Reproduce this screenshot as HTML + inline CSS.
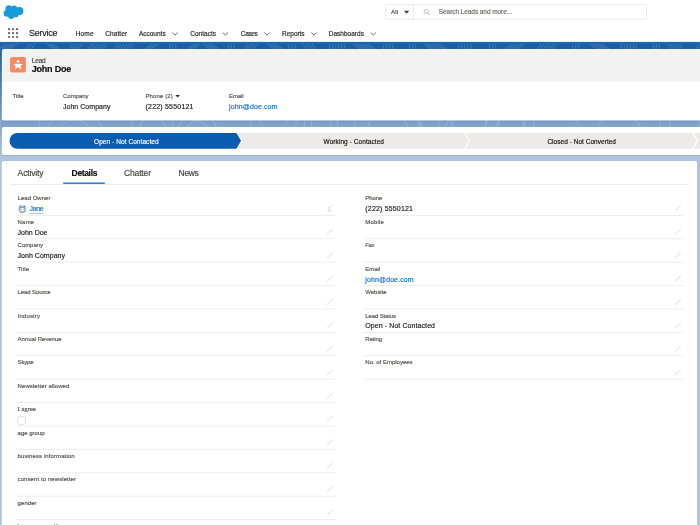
<!DOCTYPE html>
<html><head><meta charset="utf-8"><title>John Doe | Salesforce</title>
<style>
html,body{margin:0;padding:0}
body{width:700px;height:525px;overflow:hidden;position:relative;background:#b0c4df;font-family:"Liberation Sans",sans-serif}
.abs{position:absolute}
.t{position:absolute;white-space:pre;-webkit-text-stroke:0.15px currentColor}
#hdr{left:0;top:0;width:700px;height:42px;background:#fff}
#brandline{left:0;top:42px;width:700px;height:2px;background:#1468c4}
#band{left:0;top:44px;width:700px;height:118px;background:linear-gradient(#1b5e9e 0,#1d609f 5px,#7fa2cc 80px,#afc3e1 113px,#b0c4df 118px)}
.card{position:absolute;background:#fff;border-radius:2px}
.sh{position:absolute;height:1.6px;background:linear-gradient(rgba(30,60,110,.26),rgba(30,60,110,0))}
#c1{left:2px;top:49.2px;width:700px;height:71.3px}
#c1h{left:2px;top:49.2px;width:700px;height:32.4px;background:#f3f2f2;border-radius:2px 0 0 0}
#c2{left:2px;top:127px;width:700px;height:28px}
#c3{left:2px;top:160.9px;width:695px;height:380px}
svg{position:absolute;left:0;top:0}
#txt{position:absolute;left:0;top:0;width:700px;height:525px;will-change:transform}
</style></head><body>
<div class="abs" id="hdr"></div>
<div class="abs" id="brandline"></div>
<div class="abs" id="band"></div>
<div class="sh" style="left:3px;top:120.3px;width:697px"></div><div class="sh" style="left:3px;top:154.8px;width:697px"></div>
<svg width="700" height="525" viewBox="0 0 700 525">
<path d="M-2.9 49.9 L6.9 43.1 M0.1 49.9 L9.9 43.1 M3.1 49.9 L12.9 43.1 M6.1 49.9 L15.9 43.1 M9.1 49.9 L18.9 43.1 M23.5 51.4 L30.4 41.6 M26.5 51.4 L33.4 41.6 M29.5 51.4 L36.4 41.6 M45.2 43.1 L55.1 49.9 M48.2 43.1 L58.1 49.9 M51.2 43.1 L61.1 49.9 M67.5 51.4 L74.4 41.6 M70.5 51.4 L77.4 41.6 M73.5 51.4 L80.4 41.6 M76.5 51.4 L83.4 41.6 M86.4 51.4 L93.3 41.6 M89.4 51.4 L96.3 41.6 M92.4 51.4 L99.3 41.6 M95.4 51.4 L102.3 41.6 M98.4 51.4 L105.3 41.6 M101.4 51.4 L108.3 41.6 M112.8 51.4 L119.7 41.6 M115.8 51.4 L122.7 41.6 M118.8 51.4 L125.7 41.6 M121.8 51.4 L128.7 41.6 M124.8 51.4 L131.7 41.6 M127.8 51.4 L134.7 41.6 M143.6 49.9 L153.4 43.1 M146.6 49.9 L156.4 43.1 M149.6 49.9 L159.4 43.1 M168.8 40.6 L170.9 52.4 M171.8 40.6 L173.9 52.4 M174.8 40.6 L176.9 52.4 M185.8 49.9 L195.6 43.1 M188.8 49.9 L198.6 43.1 M191.8 49.9 L201.6 43.1 M201.2 43.1 L211.1 49.9 M204.2 43.1 L214.1 49.9 M207.2 43.1 L217.1 49.9 M210.2 43.1 L220.1 49.9 M227.3 40.6 L229.4 52.4 M230.3 40.6 L232.4 52.4 M233.3 40.6 L235.4 52.4 M243.0 51.4 L249.9 41.6 M246.0 51.4 L252.9 41.6 M249.0 51.4 L255.9 41.6 M252.0 51.4 L258.9 41.6 M265.3 43.1 L275.2 49.9 M268.3 43.1 L278.2 49.9 M271.3 43.1 L281.2 49.9 M274.3 43.1 L284.2 49.9 M288.2 40.6 L290.3 52.4 M291.2 40.6 L293.3 52.4 M294.2 40.6 L296.3 52.4 M301.4 41.6 L308.3 51.4 M304.4 41.6 L311.3 51.4 M307.4 41.6 L314.3 51.4 M310.4 41.6 L317.3 51.4 M328.6 52.4 L330.7 40.6 M331.6 52.4 L333.7 40.6 M334.6 52.4 L336.7 40.6 M337.6 52.4 L339.7 40.6 M340.6 52.4 L342.7 40.6 M343.6 52.4 L345.7 40.6 M351.8 43.1 L361.7 49.9 M354.8 43.1 L364.7 49.9 M357.8 43.1 L367.7 49.9 M360.8 43.1 L370.7 49.9 M363.8 43.1 L373.7 49.9 M366.8 43.1 L376.7 49.9 M384.8 40.6 L382.7 52.4 M387.8 40.6 L385.7 52.4 M390.8 40.6 L388.7 52.4 M393.8 40.6 L391.7 52.4 M408.5 40.6 L410.6 52.4 M411.5 40.6 L413.6 52.4 M414.5 40.6 L416.6 52.4 M422.6 43.1 L432.5 49.9 M425.6 43.1 L435.5 49.9 M428.6 43.1 L438.5 49.9 M431.6 43.1 L441.5 49.9 M434.6 43.1 L444.5 49.9 M437.6 43.1 L447.5 49.9 M457.8 40.6 L459.9 52.4 M460.8 40.6 L462.9 52.4 M463.8 40.6 L465.9 52.4 M466.8 40.6 L468.9 52.4 M469.8 40.6 L471.9 52.4 M488.6 40.6 L490.7 52.4 M491.6 40.6 L493.7 52.4 M494.6 40.6 L496.7 52.4 M503.9 49.9 L513.7 43.1 M506.9 49.9 L516.7 43.1 M509.9 49.9 L519.7 43.1 M512.9 49.9 L522.7 43.1 M515.9 49.9 L525.7 43.1 M535.7 51.4 L542.6 41.6 M538.7 51.4 L545.6 41.6 M541.7 51.4 L548.6 41.6 M544.7 51.4 L551.6 41.6 M547.7 51.4 L554.6 41.6 M550.7 51.4 L557.6 41.6 M571.7 52.4 L573.8 40.6 M574.7 52.4 L576.8 40.6 M577.7 52.4 L579.8 40.6 M588.5 43.1 L598.3 49.9 M591.5 43.1 L601.3 49.9 M594.5 43.1 L604.3 49.9 M597.5 43.1 L607.3 49.9 M600.5 43.1 L610.3 49.9 M620.3 40.6 L622.4 52.4 M623.3 40.6 L625.4 52.4 M626.3 40.6 L628.4 52.4 M629.3 40.6 L631.4 52.4 M632.3 40.6 L634.4 52.4 M635.3 40.6 L637.4 52.4 M652.2 52.4 L654.3 40.6 M655.2 52.4 L657.3 40.6 M658.2 52.4 L660.3 40.6 M665.8 41.6 L672.7 51.4 M668.8 41.6 L675.7 51.4 M671.8 41.6 L678.7 51.4 M674.8 41.6 L681.7 51.4 M677.8 41.6 L684.7 51.4 M693.8 51.4 L700.6 41.6 M696.8 51.4 L703.6 41.6 M699.8 51.4 L706.6 41.6" fill="none" stroke="#fff" stroke-opacity="0.2" stroke-width="0.9"/>
<rect x="0" y="41.9" width="700" height="2.1" fill="#1468c4"/>
<clipPath id="cb"><rect x="0" y="100" width="700" height="30"/></clipPath><g clip-path="url(#cb)" fill="none" stroke="#fff" stroke-opacity="0.22" stroke-width="0.8"><circle cx="20.0" cy="128.2" r="20.2"/><circle cx="75.1" cy="136.8" r="28.3"/><circle cx="75.1" cy="136.8" r="17.0"/><circle cx="152.4" cy="129.1" r="21.1"/><circle cx="152.4" cy="129.1" r="12.7"/><circle cx="197.2" cy="132.7" r="19.7"/><circle cx="197.2" cy="132.7" r="11.8"/><circle cx="273.5" cy="116.7" r="23.9"/><circle cx="273.5" cy="116.7" r="14.4"/><circle cx="321.0" cy="124.1" r="16.7"/><circle cx="321.0" cy="124.1" r="10.0"/><circle cx="387.7" cy="131.1" r="33.7"/><circle cx="387.7" cy="131.1" r="20.2"/><circle cx="433.1" cy="116.2" r="15.7"/><circle cx="468.7" cy="117.1" r="30.6"/><circle cx="468.7" cy="117.1" r="18.4"/><circle cx="510.2" cy="129.1" r="24.7"/><circle cx="510.2" cy="129.1" r="14.8"/><circle cx="550.9" cy="138.6" r="31.2"/><circle cx="619.2" cy="136.4" r="23.1"/><circle cx="684.8" cy="123.1" r="25.2"/><circle cx="684.8" cy="123.1" r="15.1"/></g>
<path d="M1.85 51.2 a2 2 0 0 1 2 -2.1 H700 V83 H1.85 Z" fill="#f3f2f2"/>
<path d="M1.85 81.5 H700 V120.4 H3.85 a2 2 0 0 1 -2 -2 Z" fill="#fff"/>
<path d="M1.85 128.9 a2 2 0 0 1 2 -2 H700 V154.9 H3.85 a2 2 0 0 1 -2 -2 Z" fill="#fff"/>
<path d="M1.8 162.9 a2 2 0 0 1 2 -2 H695 a2 2 0 0 1 2 2 V530 H1.8 Z" fill="#fff"/>
<g fill="#1a9ad9"><circle cx="8.9" cy="8.7" r="3.5"/><circle cx="14.2" cy="8.6" r="3"/><circle cx="19.3" cy="11.1" r="4.1"/><circle cx="7" cy="13.4" r="3.3"/><circle cx="11.1" cy="15.9" r="3"/><circle cx="15.6" cy="14.2" r="3.1"/><rect x="7" y="8" width="11" height="7"/></g>
<rect x="8.00" y="28.10" width="2.2" height="2.2" rx="0.8" fill="#6d6b69"/>
<rect x="11.95" y="28.10" width="2.2" height="2.2" rx="0.8" fill="#6d6b69"/>
<rect x="15.90" y="28.10" width="2.2" height="2.2" rx="0.8" fill="#6d6b69"/>
<rect x="8.00" y="32.00" width="2.2" height="2.2" rx="0.8" fill="#6d6b69"/>
<rect x="11.95" y="32.00" width="2.2" height="2.2" rx="0.8" fill="#6d6b69"/>
<rect x="15.90" y="32.00" width="2.2" height="2.2" rx="0.8" fill="#6d6b69"/>
<rect x="8.00" y="35.90" width="2.2" height="2.2" rx="0.8" fill="#6d6b69"/>
<rect x="11.95" y="35.90" width="2.2" height="2.2" rx="0.8" fill="#6d6b69"/>
<rect x="15.90" y="35.90" width="2.2" height="2.2" rx="0.8" fill="#6d6b69"/>
<path d="M172.5 32.6 L175.1 35.1 L177.7 32.6" fill="none" stroke="#605e5c" stroke-width="0.95"/>
<path d="M222.8 32.6 L225.4 35.1 L228.0 32.6" fill="none" stroke="#605e5c" stroke-width="0.95"/>
<path d="M264.3 32.6 L266.9 35.1 L269.5 32.6" fill="none" stroke="#605e5c" stroke-width="0.95"/>
<path d="M311.4 32.6 L314.0 35.1 L316.6 32.6" fill="none" stroke="#605e5c" stroke-width="0.95"/>
<path d="M370.7 32.6 L373.3 35.1 L375.9 32.6" fill="none" stroke="#605e5c" stroke-width="0.95"/>
<rect x="385.5" y="4.6" width="261" height="14.6" rx="2" fill="#fff" stroke="#dddbda" stroke-width="0.6"/>
<line x1="413.4" y1="4.6" x2="413.4" y2="19.2" stroke="#dddbda" stroke-width="0.6"/>
<path d="M404 10.8 h5.2 l-2.6 3 z" fill="#3e3e3c"/>
<circle cx="426.2" cy="11.6" r="2.1" fill="none" stroke="#a5a3a1" stroke-width="0.7"/><line x1="427.8" y1="13.2" x2="429.6" y2="15" stroke="#a5a3a1" stroke-width="0.7"/>
<rect x="10.1" y="56.9" width="15.8" height="15.7" rx="1.8" fill="#f88962"/>
<circle cx="18" cy="61.3" r="1.4" fill="#fff"/>
<path d="M13.3 64.3 L16.2 63.8 L18 63.65 L19.8 63.8 L22.8 64.3 L20.4 66.3 L21.5 69.7 L18 67.3 L14.6 69.7 L15.7 66.3 Z" fill="#fff"/>
<path d="M175.3 94.9 h4.6 l-2.3 2.7 z" fill="#2b2826"/>
<path d="M17.4 133 H236.4 L241.1 140.8 L236.4 148.7 H17.4 A7.85 7.85 0 0 1 17.4 133 Z" fill="#0a5cb0"/>
<path d="M237.7 133 H700 V148.7 H237.7 L242.4 140.8 Z" fill="#ecebea"/>
<path d="M464.6 132.6 L469.5 140.8 L464.6 149.1" fill="none" stroke="#fff" stroke-width="1.1"/>
<path d="M692.5 132.6 L697.4 140.8 L692.5 149.1" fill="none" stroke="#fff" stroke-width="1.1"/>
<rect x="10" y="184" width="679" height="0.7" fill="#e3e2e1"/>
<rect x="63.2" y="182.5" width="41.6" height="1.4" fill="#1b73cf"/>
<rect x="16" y="214.95" width="319.6" height="0.8" fill="#e9e9e8"/>
<rect x="16" y="238.35" width="319.6" height="0.8" fill="#e9e9e8"/>
<rect x="16" y="261.75" width="319.6" height="0.8" fill="#e9e9e8"/>
<rect x="16" y="285.15" width="319.6" height="0.8" fill="#e9e9e8"/>
<rect x="16" y="308.55" width="319.6" height="0.8" fill="#e9e9e8"/>
<rect x="16" y="331.95" width="319.6" height="0.8" fill="#e9e9e8"/>
<rect x="16" y="355.35" width="319.6" height="0.8" fill="#e9e9e8"/>
<rect x="16" y="378.75" width="319.6" height="0.8" fill="#e9e9e8"/>
<rect x="16" y="402.15" width="319.6" height="0.8" fill="#e9e9e8"/>
<rect x="16" y="425.55" width="319.6" height="0.8" fill="#e9e9e8"/>
<rect x="16" y="448.95" width="319.6" height="0.8" fill="#e9e9e8"/>
<rect x="16" y="472.35" width="319.6" height="0.8" fill="#e9e9e8"/>
<rect x="16" y="495.75" width="319.6" height="0.8" fill="#e9e9e8"/>
<rect x="16" y="519.15" width="319.6" height="0.8" fill="#e9e9e8"/>
<rect x="363" y="214.95" width="320.4" height="0.8" fill="#e9e9e8"/>
<rect x="363" y="238.35" width="320.4" height="0.8" fill="#e9e9e8"/>
<rect x="363" y="261.75" width="320.4" height="0.8" fill="#e9e9e8"/>
<rect x="363" y="285.15" width="320.4" height="0.8" fill="#e9e9e8"/>
<rect x="363" y="308.55" width="320.4" height="0.8" fill="#e9e9e8"/>
<rect x="363" y="331.95" width="320.4" height="0.8" fill="#e9e9e8"/>
<rect x="363" y="355.35" width="320.4" height="0.8" fill="#e9e9e8"/>
<rect x="363" y="378.75" width="320.4" height="0.8" fill="#e9e9e8"/>
<path d="M327.4 234.2 L332.5 229.3" stroke="#e7e7e7" stroke-width="1.15" stroke-linecap="round"/>
<path d="M327.4 257.6 L332.5 252.8" stroke="#e7e7e7" stroke-width="1.15" stroke-linecap="round"/>
<path d="M327.4 281.1 L332.5 276.1" stroke="#e7e7e7" stroke-width="1.15" stroke-linecap="round"/>
<path d="M327.4 304.4 L332.5 299.5" stroke="#e7e7e7" stroke-width="1.15" stroke-linecap="round"/>
<path d="M327.4 327.9 L332.5 322.9" stroke="#e7e7e7" stroke-width="1.15" stroke-linecap="round"/>
<path d="M327.4 351.3 L332.5 346.4" stroke="#e7e7e7" stroke-width="1.15" stroke-linecap="round"/>
<path d="M327.4 374.7 L332.5 369.8" stroke="#e7e7e7" stroke-width="1.15" stroke-linecap="round"/>
<path d="M327.4 398.1 L332.5 393.1" stroke="#e7e7e7" stroke-width="1.15" stroke-linecap="round"/>
<path d="M327.4 421.4 L332.5 416.5" stroke="#e7e7e7" stroke-width="1.15" stroke-linecap="round"/>
<path d="M327.4 444.9 L332.5 439.9" stroke="#e7e7e7" stroke-width="1.15" stroke-linecap="round"/>
<path d="M327.4 468.3 L332.5 463.4" stroke="#e7e7e7" stroke-width="1.15" stroke-linecap="round"/>
<path d="M327.4 491.7 L332.5 486.8" stroke="#e7e7e7" stroke-width="1.15" stroke-linecap="round"/>
<path d="M327.4 515.0 L332.5 510.1" stroke="#e7e7e7" stroke-width="1.15" stroke-linecap="round"/>
<path d="M675.4 210.8 L680.5 205.9" stroke="#e7e7e7" stroke-width="1.15" stroke-linecap="round"/>
<path d="M675.4 234.2 L680.5 229.3" stroke="#e7e7e7" stroke-width="1.15" stroke-linecap="round"/>
<path d="M675.4 257.6 L680.5 252.8" stroke="#e7e7e7" stroke-width="1.15" stroke-linecap="round"/>
<path d="M675.4 281.1 L680.5 276.1" stroke="#e7e7e7" stroke-width="1.15" stroke-linecap="round"/>
<path d="M675.4 304.4 L680.5 299.5" stroke="#e7e7e7" stroke-width="1.15" stroke-linecap="round"/>
<path d="M675.4 327.9 L680.5 322.9" stroke="#e7e7e7" stroke-width="1.15" stroke-linecap="round"/>
<path d="M675.4 351.3 L680.5 346.4" stroke="#e7e7e7" stroke-width="1.15" stroke-linecap="round"/>
<path d="M675.4 374.7 L680.5 369.8" stroke="#e7e7e7" stroke-width="1.15" stroke-linecap="round"/>
<g fill="#e2e2e2"><circle cx="329.4" cy="207.6" r="1.3"/><path d="M326.9 211.4 q0.3 -2.2 2.5 -2.2 q2.2 0 2.5 2.2 z"/><path d="M330.6 206.3 l1.6 -1.2 l1 1.6" fill="none" stroke="#e2e2e2" stroke-width="0.6"/></g>
<rect x="29.6" y="212.9" width="14" height="0.8" fill="#7fb2e8"/>
<circle cx="22.3" cy="209.3" r="4.3" fill="#d3deef"/><circle cx="20.1" cy="206.5" r="1.1" fill="#7d95bd"/><circle cx="24.5" cy="206.5" r="1.1" fill="#7d95bd"/><circle cx="22.3" cy="209.6" r="3.2" fill="#7d95bd"/><ellipse cx="22.3" cy="209.7" rx="2.3" ry="1.9" fill="#f4f6fb"/><circle cx="21.4" cy="209.6" r="0.45" fill="#5b74a3"/><circle cx="23.2" cy="209.6" r="0.45" fill="#5b74a3"/>
<rect x="17.6" y="416.6" width="7.9" height="7.7" rx="1.6" fill="#fff" stroke="#d4d2d0" stroke-width="0.7"/>
</svg>
<div id="txt">
<span class="t" style="left:391.00px;top:9px;font:400 6px/1 'Liberation Sans',sans-serif;letter-spacing:0.164px;color:#3e3e3c">All</span>
<span class="t" style="left:438.80px;top:9px;font:400 6.5px/1 'Liberation Sans',sans-serif;letter-spacing:-0.069px;color:#6b6967">Search Leads and more...</span>
<span class="t" style="left:29.00px;top:29px;font:400 9px/1 'Liberation Sans',sans-serif;letter-spacing:-0.236px;color:#1a1a1a">Service</span>
<span class="t" style="left:75.70px;top:31px;font:400 6.5px/1 'Liberation Sans',sans-serif;letter-spacing:0.185px;color:#1c1c1c">Home</span>
<span class="t" style="left:105.30px;top:31px;font:400 6.5px/1 'Liberation Sans',sans-serif;letter-spacing:0.079px;color:#1c1c1c">Chatter</span>
<span class="t" style="left:138.90px;top:31px;font:400 6.5px/1 'Liberation Sans',sans-serif;letter-spacing:0.007px;color:#1c1c1c">Accounts</span>
<span class="t" style="left:190.30px;top:31px;font:400 6.5px/1 'Liberation Sans',sans-serif;letter-spacing:0.006px;color:#1c1c1c">Contacts</span>
<span class="t" style="left:240.80px;top:31px;font:400 6.5px/1 'Liberation Sans',sans-serif;letter-spacing:-0.350px;color:#1c1c1c">Cases</span>
<span class="t" style="left:282.10px;top:31px;font:400 6.5px/1 'Liberation Sans',sans-serif;letter-spacing:-0.044px;color:#1c1c1c">Reports</span>
<span class="t" style="left:328.80px;top:31px;font:400 6.5px/1 'Liberation Sans',sans-serif;letter-spacing:0.004px;color:#1c1c1c">Dashboards</span>
<span class="t" style="left:31.80px;top:58px;font:400 6.5px/1 'Liberation Sans',sans-serif;letter-spacing:-0.190px;color:#3e3e3c">Lead</span>
<span class="t" style="left:31.80px;top:65px;font:700 9px/1 'Liberation Sans',sans-serif;letter-spacing:-0.231px;color:#0c0c0c">John Doe</span>
<span class="t" style="left:12.40px;top:93px;font:400 6px/1 'Liberation Sans',sans-serif;letter-spacing:0.019px;color:#50504e">Title</span>
<span class="t" style="left:63.00px;top:93px;font:400 6px/1 'Liberation Sans',sans-serif;letter-spacing:-0.015px;color:#50504e">Company</span>
<span class="t" style="left:63.00px;top:103px;font:400 7px/1 'Liberation Sans',sans-serif;letter-spacing:0.028px;color:#181818">John Company</span>
<span class="t" style="left:145.50px;top:93px;font:400 6px/1 'Liberation Sans',sans-serif;letter-spacing:0.105px;color:#50504e">Phone (2)</span>
<span class="t" style="left:145.50px;top:103px;font:400 7px/1 'Liberation Sans',sans-serif;letter-spacing:0.204px;color:#181818">(222) 5550121</span>
<span class="t" style="left:229.00px;top:93px;font:400 6px/1 'Liberation Sans',sans-serif;letter-spacing:-0.104px;color:#50504e">Email</span>
<span class="t" style="left:229.00px;top:103px;font:400 7px/1 'Liberation Sans',sans-serif;letter-spacing:0.109px;color:#0b6fd0">john@doe.com</span>
<span class="t" style="left:94.00px;top:139px;font:400 6.5px/1 'Liberation Sans',sans-serif;letter-spacing:0.072px;color:#ffffff">Open - Not Contacted</span>
<span class="t" style="left:323.60px;top:139px;font:400 6.5px/1 'Liberation Sans',sans-serif;letter-spacing:0.070px;color:#101010">Working - Contacted</span>
<span class="t" style="left:547.40px;top:139px;font:400 6.5px/1 'Liberation Sans',sans-serif;letter-spacing:0.032px;color:#101010">Closed - Not Converted</span>
<span class="t" style="left:17.60px;top:169px;font:400 8.5px/1 'Liberation Sans',sans-serif;letter-spacing:-0.132px;color:#3e3e3c">Activity</span>
<span class="t" style="left:71.60px;top:169px;font:700 8.5px/1 'Liberation Sans',sans-serif;letter-spacing:-0.350px;color:#0c0c0c">Details</span>
<span class="t" style="left:124.00px;top:169px;font:400 8.5px/1 'Liberation Sans',sans-serif;letter-spacing:-0.146px;color:#3e3e3c">Chatter</span>
<span class="t" style="left:178.60px;top:169px;font:400 8.5px/1 'Liberation Sans',sans-serif;letter-spacing:-0.350px;color:#3e3e3c">News</span>
<span class="t" style="left:17.60px;top:195px;font:400 6px/1 'Liberation Sans',sans-serif;letter-spacing:0.012px;color:#50504e">Lead Owner</span>
<span class="t" style="left:17.60px;top:219px;font:400 6px/1 'Liberation Sans',sans-serif;letter-spacing:0.195px;color:#50504e">Name</span>
<span class="t" style="left:17.60px;top:229px;font:400 7px/1 'Liberation Sans',sans-serif;letter-spacing:-0.010px;color:#181818">John Doe</span>
<span class="t" style="left:17.60px;top:242px;font:400 6px/1 'Liberation Sans',sans-serif;letter-spacing:-0.048px;color:#50504e">Company</span>
<span class="t" style="left:17.60px;top:252px;font:400 7px/1 'Liberation Sans',sans-serif;letter-spacing:0.028px;color:#181818">Jonh Company</span>
<span class="t" style="left:17.60px;top:266px;font:400 6px/1 'Liberation Sans',sans-serif;letter-spacing:0.069px;color:#50504e">Title</span>
<span class="t" style="left:17.60px;top:289px;font:400 6px/1 'Liberation Sans',sans-serif;letter-spacing:-0.103px;color:#50504e">Lead Source</span>
<span class="t" style="left:17.60px;top:313px;font:400 6px/1 'Liberation Sans',sans-serif;letter-spacing:0.151px;color:#50504e">Industry</span>
<span class="t" style="left:17.60px;top:336px;font:400 6px/1 'Liberation Sans',sans-serif;letter-spacing:-0.037px;color:#50504e">Annual Revenue</span>
<span class="t" style="left:17.60px;top:359px;font:400 6px/1 'Liberation Sans',sans-serif;letter-spacing:-0.197px;color:#50504e">Skype</span>
<span class="t" style="left:17.60px;top:383px;font:400 6px/1 'Liberation Sans',sans-serif;letter-spacing:0.079px;color:#50504e">Newsletter allowed</span>
<span class="t" style="left:17.60px;top:406px;font:400 7px/1 'Liberation Serif',serif;letter-spacing:-0.156px;color:#50504e">I agree</span>
<span class="t" style="left:17.60px;top:430px;font:400 6px/1 'Liberation Sans',sans-serif;letter-spacing:-0.004px;color:#50504e">age group</span>
<span class="t" style="left:17.60px;top:453px;font:400 6px/1 'Liberation Sans',sans-serif;letter-spacing:0.104px;color:#50504e">business information</span>
<span class="t" style="left:17.60px;top:476px;font:400 6px/1 'Liberation Sans',sans-serif;letter-spacing:0.085px;color:#50504e">consent to newsletter</span>
<span class="t" style="left:17.60px;top:500px;font:400 6px/1 'Liberation Sans',sans-serif;letter-spacing:0.062px;color:#50504e">gender</span>
<span class="t" style="left:17.60px;top:523px;font:400 6px/1 'Liberation Sans',sans-serif;letter-spacing:-0.166px;color:#50504e">language used by user</span>
<span class="t" style="left:29.60px;top:205px;font:400 7px/1 'Liberation Sans',sans-serif;letter-spacing:-0.350px;color:#0b6fd0">Jane</span>
<span class="t" style="left:365.30px;top:195px;font:400 6px/1 'Liberation Sans',sans-serif;letter-spacing:-0.065px;color:#50504e">Phone</span>
<span class="t" style="left:365.30px;top:205px;font:400 7px/1 'Liberation Sans',sans-serif;letter-spacing:0.179px;color:#181818">(222) 5550121</span>
<span class="t" style="left:365.30px;top:219px;font:400 6px/1 'Liberation Sans',sans-serif;letter-spacing:0.163px;color:#50504e">Mobile</span>
<span class="t" style="left:365.30px;top:242px;font:400 6px/1 'Liberation Sans',sans-serif;letter-spacing:-0.350px;color:#50504e">Fax</span>
<span class="t" style="left:365.30px;top:266px;font:400 6px/1 'Liberation Sans',sans-serif;letter-spacing:-0.029px;color:#50504e">Email</span>
<span class="t" style="left:365.30px;top:276px;font:400 7px/1 'Liberation Sans',sans-serif;letter-spacing:0.100px;color:#0b6fd0">john@doe.com</span>
<span class="t" style="left:365.30px;top:289px;font:400 6px/1 'Liberation Sans',sans-serif;letter-spacing:-0.046px;color:#50504e">Website</span>
<span class="t" style="left:365.30px;top:313px;font:400 6px/1 'Liberation Sans',sans-serif;letter-spacing:-0.133px;color:#50504e">Lead Status</span>
<span class="t" style="left:365.30px;top:322px;font:400 7px/1 'Liberation Sans',sans-serif;letter-spacing:0.085px;color:#181818">Open - Not Contacted</span>
<span class="t" style="left:365.30px;top:336px;font:400 6px/1 'Liberation Sans',sans-serif;letter-spacing:-0.129px;color:#50504e">Rating</span>
<span class="t" style="left:365.30px;top:359px;font:400 6px/1 'Liberation Sans',sans-serif;letter-spacing:-0.004px;color:#50504e">No. of Employees</span>
</div>
</body></html>
